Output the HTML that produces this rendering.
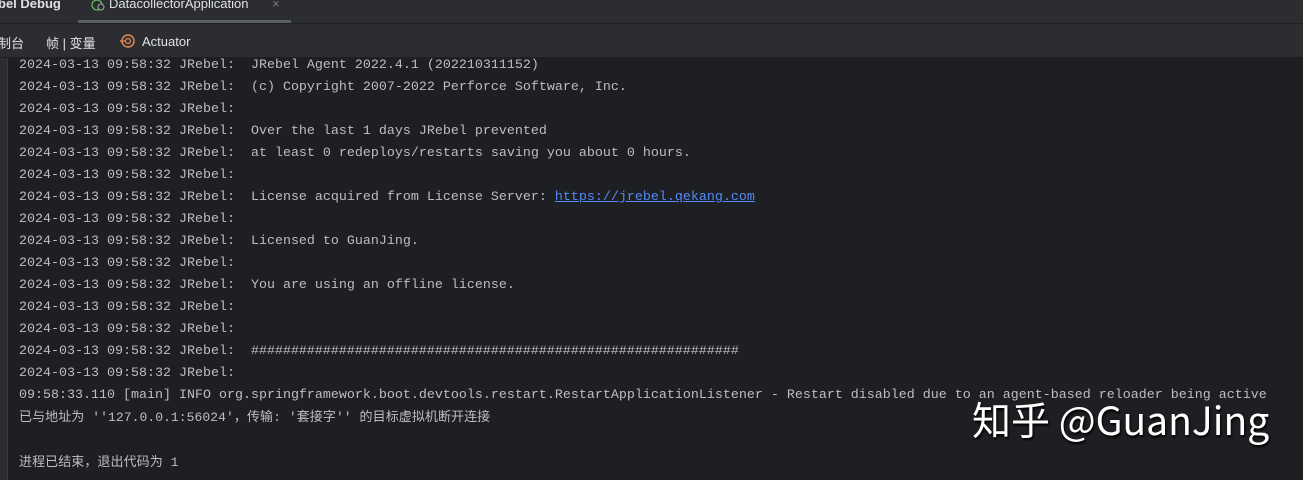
<!DOCTYPE html>
<html><head><meta charset="utf-8"><style>
body{margin:0;width:1303px;height:480px;background:#1e1f22;overflow:hidden;position:relative;font-family:"Liberation Sans","Noto Sans CJK SC",sans-serif}
.tabs{position:absolute;left:0;top:0;width:1303px;height:23px;background:#2b2d30;border-bottom:1px solid #1e1f22}
.tb{position:absolute;left:0;top:24px;width:1303px;height:33px;background:#2b2d30}
.t{position:absolute;color:#dfe1e5;font-size:13px;white-space:nowrap}
.gut{position:absolute;left:0;top:58px;width:7px;height:422px;background:#2b2d30;border-right:1px solid #393b40}
.log{position:absolute;left:19px;top:55px;font-family:"Liberation Mono","Noto Sans CJK SC",monospace;font-size:13.33px;line-height:22px;color:#bcbec4;white-space:pre}
a{color:#548af7;text-decoration:underline}
.cj{font-size:13px;letter-spacing:0.07px}
.wm{position:absolute;left:972px;top:391px;font-family:"Noto Sans CJK SC",sans-serif;font-size:39px;color:#fff;text-shadow:1px 2px 2px #000;white-space:nowrap}
</style></head><body>
<div class="tabs"></div>
<div class="t" style="left:-2px;top:-4px;font-weight:bold">bel Debug</div>
<svg style="position:absolute;left:90px;top:0" width="16" height="12"><circle cx="7" cy="5" r="5" fill="none" stroke="#5fb865" stroke-width="1.3"/><circle cx="11" cy="7" r="3" fill="#2b2d30" stroke="#aaa" stroke-width="1"/></svg>
<div class="t" style="left:109px;top:-4px">DatacollectorApplication</div>
<div class="t" style="left:272px;top:-4px;color:#777">×</div>
<div style="position:absolute;left:78px;top:20px;width:213px;height:3px;background:#5a5d63"></div>
<div class="tb"></div>
<div class="t" style="left:-2px;top:33px">制台</div>
<div class="t" style="left:46px;top:33px">帧 | 变量</div>
<svg style="position:absolute;left:120px;top:33px" width="16" height="16"><circle cx="8" cy="8" r="6" fill="none" stroke="#e08855" stroke-width="1.5"/><circle cx="8" cy="8" r="2.5" fill="none" stroke="#e08855" stroke-width="1.3"/><line x1="0" y1="8" x2="5" y2="8" stroke="#e08855" stroke-width="1.3"/></svg>
<div class="t" style="left:142px;top:34px">Actuator</div>
<div class="gut"></div>
<div class="log">2024-03-13 09:58:32 JRebel:  JRebel Agent 2022.4.1 (202210311152)
2024-03-13 09:58:32 JRebel:  (c) Copyright 2007-2022 Perforce Software, Inc.
2024-03-13 09:58:32 JRebel:
2024-03-13 09:58:32 JRebel:  Over the last 1 days JRebel prevented
2024-03-13 09:58:32 JRebel:  at least 0 redeploys/restarts saving you about 0 hours.
2024-03-13 09:58:32 JRebel:
2024-03-13 09:58:32 JRebel:  License acquired from License Server: <a>https://jrebel.qekang.com</a>
2024-03-13 09:58:32 JRebel:
2024-03-13 09:58:32 JRebel:  Licensed to GuanJing.
2024-03-13 09:58:32 JRebel:
2024-03-13 09:58:32 JRebel:  You are using an offline license.
2024-03-13 09:58:32 JRebel:
2024-03-13 09:58:32 JRebel:
2024-03-13 09:58:32 JRebel:  #############################################################
2024-03-13 09:58:32 JRebel:
09:58:33.110 [main] INFO org.springframework.boot.devtools.restart.RestartApplicationListener - Restart disabled due to an agent-based reloader being active
<span class="cj">已与地址为 ''127.0.0.1:56024'，传输: '套接字'' 的目标虚拟机断开连接</span>

<span class="cj">进程已结束，退出代码为 1</span></div>
<div class="wm">知乎 @GuanJing</div>
</body></html>
